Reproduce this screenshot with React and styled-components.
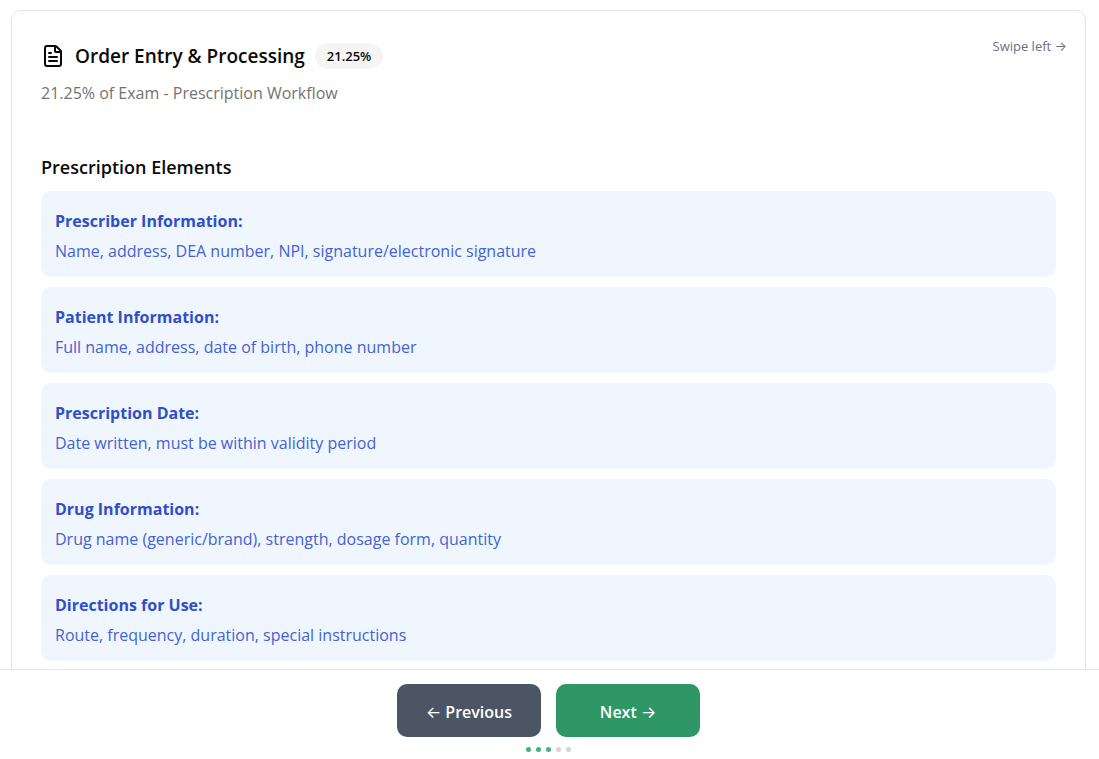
import React, { useState } from 'react';
import styled, { createGlobalStyle } from 'styled-components';
import { FileText } from 'lucide-react';

const GlobalStyle = createGlobalStyle`
  * {
    box-sizing: border-box;
  }
  body {
    margin: 0;
    background: #fff;
    color: #0a0a0a;
    font-family: 'Segoe UI', 'Open Sans', 'Noto Sans', sans-serif;
  }
`;

const Page = styled.div`
  display: flex;
  flex-direction: column;
  height: 100vh;
`;

const Content = styled.main`
  flex: 1;
  min-height: 0;
  overflow: hidden;
  padding: 10px 13px 0 11px;
`;

const Card = styled.section`
  padding: 29px;
  border: 1px solid #e5e5e5;
  border-radius: 10px;
`;

const CardHeader = styled.header`
  display: flex;
  justify-content: space-between;
  align-items: flex-start;
  margin-right: -11px;
  margin-bottom: 47px;
`;

const TitleRow = styled.div`
  display: flex;
  align-items: center;
  gap: 10px;
  height: 32px;
`;

const Title = styled.h1`
  margin: 0;
  font-size: 19px;
  font-weight: 600;
  line-height: 32px;
`;

const Badge = styled.span`
  padding: 0 12px;
  border-radius: 13px;
  background: #f5f5f4;
  font-size: 13px;
  font-weight: 600;
  line-height: 26px;
`;

const Subtitle = styled.p`
  margin: 8px 0 0;
  color: #737373;
  font-size: 16px;
  line-height: 26px;
`;

const SwipeHint = styled.span`
  color: #6b7280;
  font-size: 13px;
  line-height: 12px;
`;

const Arrow = styled.span`
  font-family: Inter, sans-serif;
  font-weight: 400;
`;

const SectionTitle = styled.h2`
  margin: 0 0 10px;
  font-size: 18px;
  font-weight: 600;
  line-height: 28px;
`;

const ElementList = styled.div`
  display: flex;
  flex-direction: column;
  gap: 10px;
`;

const ElementItem = styled.div`
  padding: 15px 14px 11px;
  border-radius: 10px;
  background: #eff6ff;
  font-size: 16px;
  line-height: 30px;
`;

const ElementName = styled.h3`
  margin: 0;
  color: #2f4fc8;
  font-size: 16px;
  font-weight: 700;
`;

const ElementText = styled.p`
  margin: 0;
  color: #4463d0;
`;

const Footer = styled.footer`
  display: flex;
  flex-direction: column;
  align-items: center;
  gap: 10px;
  padding: 14px 2px 7px 0;
  border-top: 1px solid #e5e7eb;
  background: #fff;
`;

const ButtonRow = styled.nav`
  display: flex;
  gap: 15px;
`;

const NavButton = styled.button`
  width: 144px;
  height: 53px;
  padding: 2px 0 0;
  border: none;
  border-radius: 10px;
  background: ${(props) => (props.$primary ? '#2f9666' : '#4b5563')};
  color: #fff;
  font-family: inherit;
  font-size: 16px;
  font-weight: 600;
  cursor: pointer;
`;

const Dots = styled.div`
  display: flex;
  gap: 5px;
`;

const Dot = styled.span`
  width: 5px;
  height: 5px;
  border-radius: 50%;
  background: ${(props) => (props.$active ? '#43b27f' : '#d1d5db')};
`;

const TOTAL_STEPS = 5;

const elements = [
  { name: 'Prescriber Information:', text: 'Name, address, DEA number, NPI, signature/electronic signature' },
  { name: 'Patient Information:', text: 'Full name, address, date of birth, phone number' },
  { name: 'Prescription Date:', text: 'Date written, must be within validity period' },
  { name: 'Drug Information:', text: 'Drug name (generic/brand), strength, dosage form, quantity' },
  { name: 'Directions for Use:', text: 'Route, frequency, duration, special instructions' },
];

const App = () => {
  const [step, setStep] = useState(3);

  return (
    <Page>
      <GlobalStyle />
      <Content>
        <Card>
          <CardHeader>
            <div>
              <TitleRow>
                <FileText size={24} aria-hidden="true" />
                <Title>Order Entry &amp; Processing</Title>
                <Badge>21.25%</Badge>
              </TitleRow>
              <Subtitle>21.25% of Exam - Prescription Workflow</Subtitle>
            </div>
            <SwipeHint>
              Swipe left <Arrow>→</Arrow>
            </SwipeHint>
          </CardHeader>

          <SectionTitle>Prescription Elements</SectionTitle>
          <ElementList>
            {elements.map((element) => (
              <ElementItem key={element.name}>
                <ElementName>{element.name}</ElementName>
                <ElementText>{element.text}</ElementText>
              </ElementItem>
            ))}
          </ElementList>
        </Card>
      </Content>

      <Footer>
        <ButtonRow>
          <NavButton onClick={() => setStep(Math.max(1, step - 1))}>
            <Arrow>←</Arrow> Previous
          </NavButton>
          <NavButton $primary onClick={() => setStep(Math.min(TOTAL_STEPS, step + 1))}>
            Next <Arrow>→</Arrow>
          </NavButton>
        </ButtonRow>
        <Dots>
          {Array.from({ length: TOTAL_STEPS }, (_, index) => (
            <Dot key={index} $active={index < step} />
          ))}
        </Dots>
      </Footer>
    </Page>
  );
};

export default App;
